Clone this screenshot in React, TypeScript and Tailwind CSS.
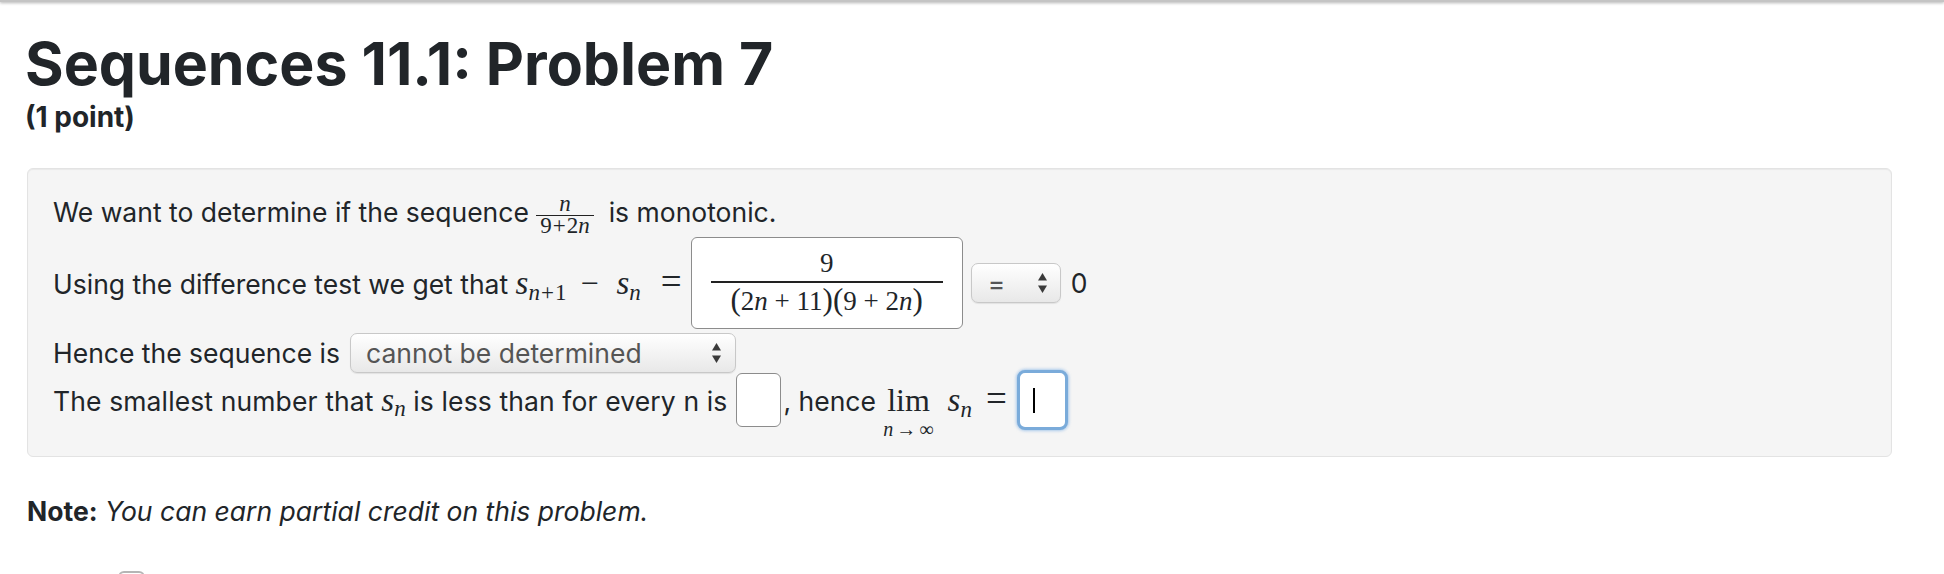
import React from "react";

const serif = "font-['Liberation_Serif','Times_New_Roman',serif]";

function Arrows({ className = "" }: { className?: string }) {
  return (
    <svg width="11" height="22" viewBox="0 0 11 22" className={className}>
      <path d="M5.5 1 L10 8.5 L1 8.5 Z" fill="#3a3a3a" />
      <path d="M5.5 21 L10 13.5 L1 13.5 Z" fill="#3a3a3a" />
    </svg>
  );
}

function S({ sub }: { sub: string }) {
  return (
    <span className={`${serif} italic text-[33px]`}>
      s<sub className="not-italic text-[23px]">{sub.split("").map((c, i) => (
        <span key={i} className={/[a-z]/.test(c) ? "italic" : c === "+" ? "mx-[1px] not-italic" : "not-italic"}>{c}</span>
      ))}</sub>
    </span>
  );
}

export default function App() {
  return (
    <div className="min-h-[574px] w-[1944px] bg-white font-['Inter','Liberation_Sans',sans-serif] text-[#212529]">
      <div className="h-[2px] w-full bg-[#c4c4c4] shadow-[0_1px_3px_rgba(0,0,0,0.35)]" />
      <div className="pl-[25px]">
        <h1 className="mt-[33px] text-[59px] font-bold leading-[58px]">
          Sequences 11.1: Problem 7
        </h1>
        <div className="mt-[9px] text-[28px] font-bold leading-[30px]">(1 point)</div>
      </div>

      <div className="ml-[27px] mt-[36px] w-[1865px] rounded-[6px] border border-[#e3e3e3] bg-[#f5f5f5] pb-[26px] pl-[25px] pt-[24px] text-[26.5px] leading-[30px] shadow-[inset_0_1px_1px_rgba(0,0,0,0.05)]">
        {/* Row 1 */}
        <div className="flex h-[44px] items-center">
          <span className="whitespace-pre">
            We want to determine if the sequence{" "}
            <span className={`${serif} inline-flex flex-col items-center align-middle text-[23px] leading-[20px]`}>
              <span className="italic">n</span>
              <span className="mt-[1px] h-[1px] w-full bg-[#222]" />
              <span className="px-[4px]">
                9<span className="mx-[1px]">+</span>2<span className="italic">n</span>
              </span>
            </span>
            {"  "}is monotonic.
          </span>
        </div>

        {/* Row 2 */}
        <div className="flex h-[92px] items-center">
          <span className="whitespace-pre">
            Using the difference test we get that <S sub="n+1" />
            <span className={`${serif} ml-[14px] mr-[18px] text-[32px]`}>{"\u2212"}</span>
            <S sub="n" />
            <span className={`${serif} ml-[20px] mr-[9px] text-[37px]`}>=</span>
          </span>
          <div className="flex h-[92px] w-[272px] items-center justify-center rounded-[6px] border border-[#8c8c8c] bg-white px-[19px]">
            <div className={`${serif} flex w-full flex-col items-center text-[27px]`}>
              <span className="leading-[30px]">9</span>
              <span className="mt-[3px] h-[2px] w-full bg-[#222]" />
              <span className="whitespace-pre leading-[34px]">
                <span className="text-[31px]">(</span>2<span className="italic">n</span> + 11<span className="text-[31px]">)</span>
                <span className="text-[31px]">(</span>9 + 2<span className="italic">n</span>
                <span className="text-[31px]">)</span>
              </span>
            </div>
          </div>
          <div className="ml-[8px] flex h-[40px] w-[90px] items-center justify-between rounded-[7px] border border-[#c8c8c8] bg-gradient-to-b from-white to-[#e8e8e8] pl-[16px] pr-[12px] text-[#555] shadow-[0_1px_1px_rgba(0,0,0,0.08)]">
            <span>=</span>
            <Arrows />
          </div>
          <span className="ml-[10px]">0</span>
        </div>

        {/* Row 3 */}
        <div className="mt-[4px] flex h-[40px] items-center">
          <span>Hence the sequence is</span>
          <div className="ml-[10px] flex h-[40px] w-[386px] items-center justify-between rounded-[7px] border border-[#c8c8c8] bg-gradient-to-b from-white to-[#e8e8e8] pl-[15px] pr-[13px] text-[#555] shadow-[0_1px_1px_rgba(0,0,0,0.08)]">
            <span>cannot be determined</span>
            <Arrows />
          </div>
        </div>

        {/* Row 4 */}
        <div className="-mt-[3px] flex h-[60px] items-center">
          <span className="whitespace-pre tracking-[0.12px]">
            The smallest number that <S sub="n" /> is less than for every n is
          </span>
          <div className="ml-[9px] h-[54px] w-[45px] rounded-[6px] border border-[#8c8c8c] bg-white" />
          <span className="ml-[2px] whitespace-pre">
            , hence{" "}
            <span className={`${serif} inline-flex flex-col items-center text-[32px] leading-[30px]`}>
              <span>lim</span>
              <span className="h-0 whitespace-nowrap text-[20px] leading-[28px]">
                <span className="italic">n</span>
                <span className="mx-[3px]">→</span>
                <span>∞</span>
              </span>
            </span>
            <span className="ml-[14px]">
              <S sub="n" />
            </span>
            <span className={`${serif} ml-[14px] mr-[10px] text-[37px]`}>=</span>
          </span>
          <div className="flex h-[60px] w-[51px] items-center rounded-[8px] border-[3px] border-[#7aabda] bg-white pl-[13px] shadow-[0_0_3px_1px_rgba(110,165,225,0.55)]">
            <span className="h-[25px] w-[2px] bg-black" />
          </div>
        </div>
      </div>

      <div className="ml-[27px] mt-[40px] text-[26.5px] leading-[29px]">
        <span className="font-bold">Note:</span> <span className="italic">You can earn partial credit on this problem.</span>
      </div>

      <div className="ml-[118px] mt-[45px] h-[26px] w-[27px] rounded-[6px] border-2 border-[#b5b5b5] bg-white" />
    </div>
  );
}
